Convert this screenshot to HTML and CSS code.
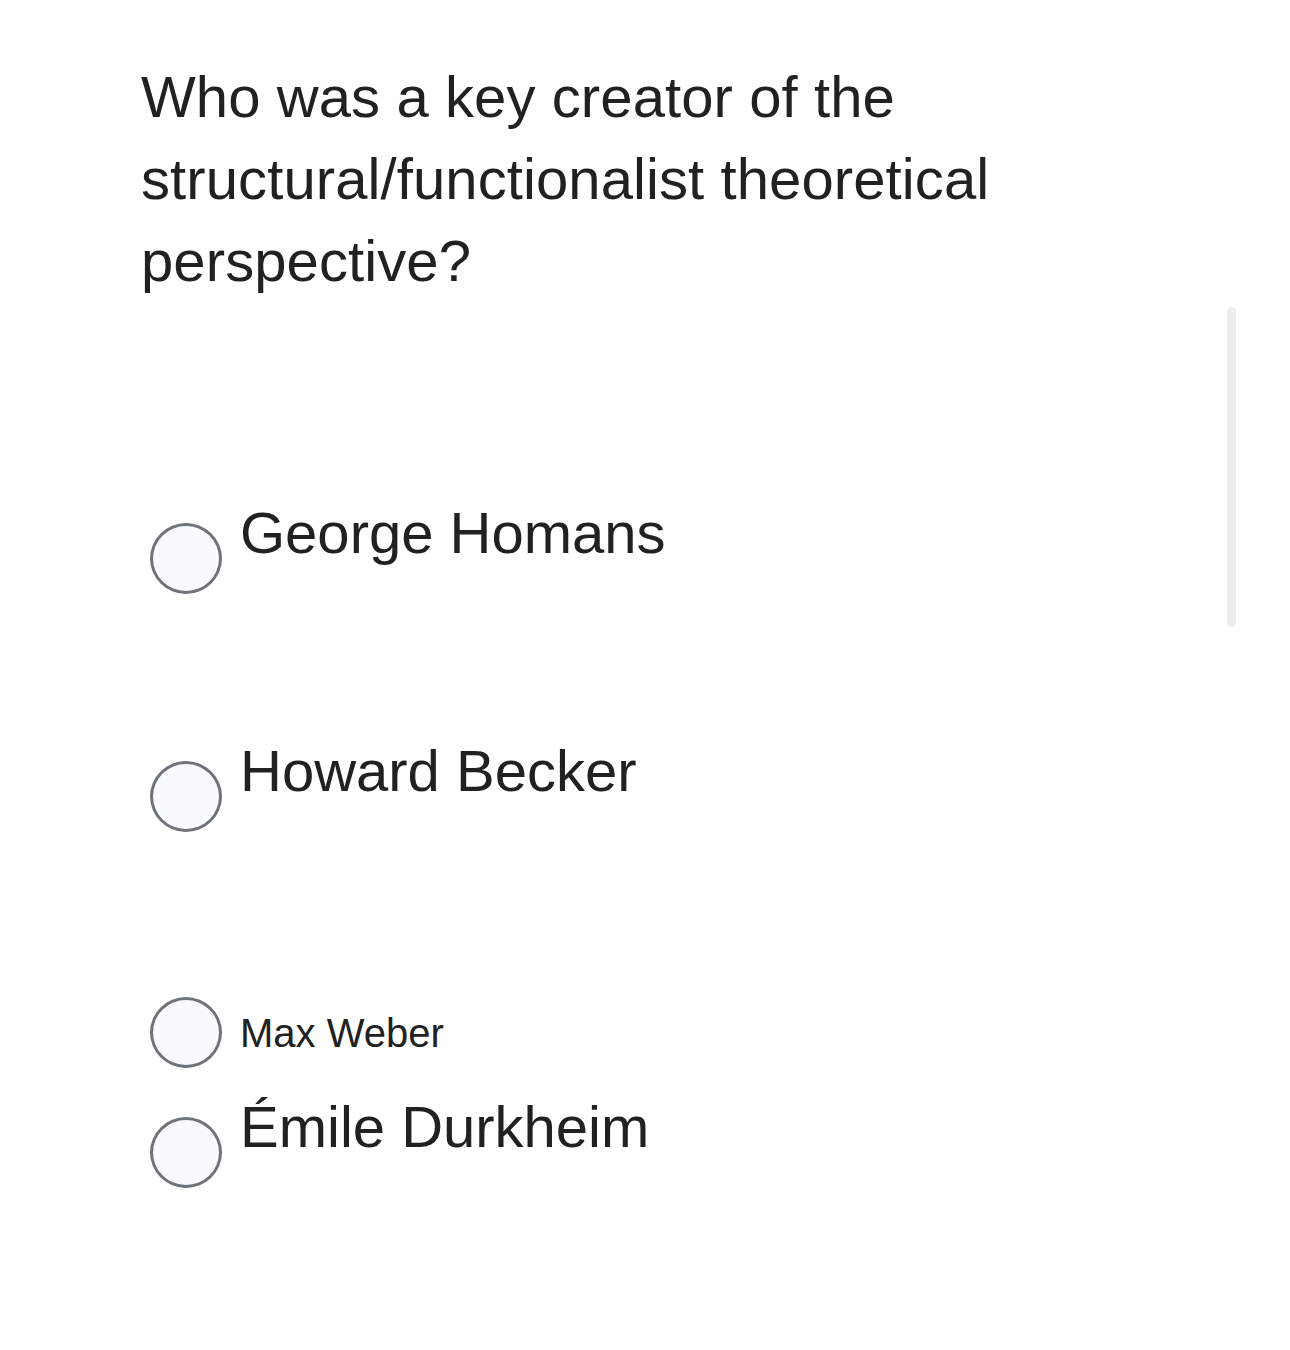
FILE: index.html
```html
<!DOCTYPE html>
<html lang="en">
<head>
<meta charset="utf-8">
<title>Question</title>
<link rel="stylesheet" href="styles.css">
</head>
<body>
<main class="page">
  <h1 class="question">Who was a key creator of the structural/functionalist theoretical perspective?</h1>
  <div class="options">
    <label class="option option--first">
      <span class="radio"></span>
      <span class="label">George Homans</span>
    </label>
    <label class="option option--second">
      <span class="radio"></span>
      <span class="label">Howard Becker</span>
    </label>
    <label class="option option--third option--small">
      <span class="radio"></span>
      <span class="label">Max Weber</span>
    </label>
    <label class="option option--fourth">
      <span class="radio"></span>
      <span class="label">Émile Durkheim</span>
    </label>
  </div>
  <div class="scroll-thumb"></div>
</main>
</body>
</html>
```
FILE: styles.css
```css
html, body {
  margin: 0;
  padding: 0;
  background: #ffffff;
}

body {
  font-family: "Liberation Sans", Arial, sans-serif;
  color: #212121;
}

.page {
  position: relative;
  width: 1290px;
  height: 1350px;
  padding: 56px 0 0 141px;
  box-sizing: border-box;
}

.question {
  margin: 0;
  width: 900px;
  font-size: 58px;
  line-height: 82px;
  font-weight: 400;
  letter-spacing: 0.1px;
}

.options {
  display: flex;
  flex-direction: column;
  margin-top: 190px;
}

.option {
  display: flex;
  align-items: flex-start;
  gap: 18px;
}

.option--second { margin-top: 136px; }
.option--third { margin-top: 165px; }
.option--fourth { margin-top: 18px; }

.radio {
  flex: none;
  width: 72px;
  height: 71px;
  box-sizing: border-box;
  margin-left: 9px;
  margin-top: 31px;
  border: 3px solid #6d7378;
  border-radius: 50%;
  background: #f8faff;
}

.label {
  font-size: 58px;
  line-height: 82px;
}

.option--small .radio {
  margin-top: 0;
}

.option--small .label {
  font-size: 40px;
  line-height: 56px;
  margin-top: 8px;
}

.scroll-thumb {
  position: absolute;
  left: 1227px;
  top: 307px;
  width: 9px;
  height: 320px;
  border-radius: 5px;
  background: #ededed;
}
```
